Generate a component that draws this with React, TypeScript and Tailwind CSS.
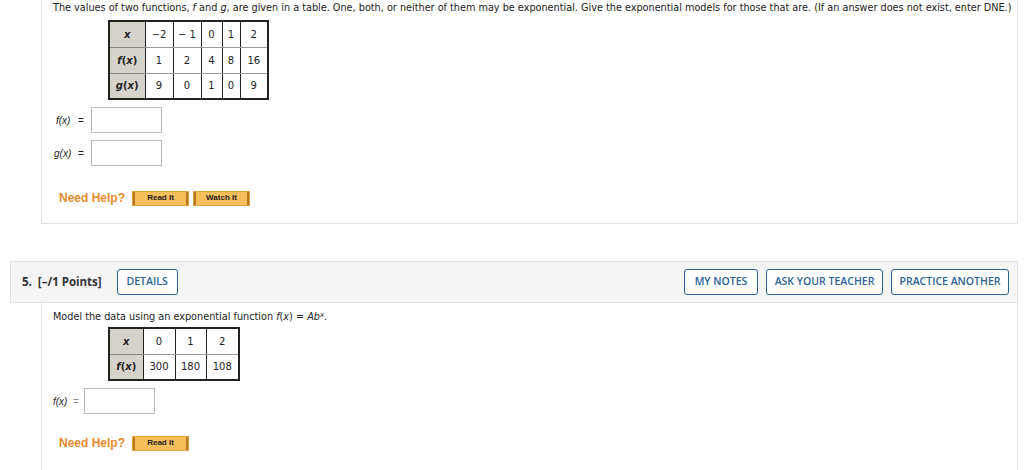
import React from "react";

const verdana = { fontFamily: '"DejaVu Sans", Verdana, sans-serif' };
const open = { fontFamily: '"Open Sans", Arial, sans-serif' };
const arial = { fontFamily: '"Liberation Sans", Arial, sans-serif' };

function HeadCell({ children }: { children: React.ReactNode }) {
  return (
    <td className="bg-[#d6d3cd] border-r border-r-[#222] border-b border-b-[#888] text-center font-bold text-[10px] px-0">
      {children}
    </td>
  );
}

function ValueTable({
  widths,
  head,
  rows,
}: {
  widths: number[];
  head: React.ReactNode[];
  rows: string[][];
}) {
  return (
    <table className="border-collapse border-2 border-[#222] text-[10px] text-[#222] table-fixed" style={verdana}>
      <colgroup>
        {widths.map((w, i) => (
          <col key={i} style={{ width: w }} />
        ))}
      </colgroup>
      <tbody>
        {rows.map((r, i) => (
          <tr key={i} className="h-[26px]">
            <HeadCell>{head[i]}</HeadCell>
            {r.map((v, j) => (
              <td
                key={j}
                className="text-center border-r border-r-[#222] border-b border-b-[#999] last:border-r-0 px-0"
              >
                {v}
              </td>
            ))}
          </tr>
        ))}
      </tbody>
    </table>
  );
}

function AnswerBox({ w = 71 }: { w?: number }) {
  return <div className="h-[26px] border border-[#bbb] bg-white" style={{ width: w }} />;
}

function HelpButton({ label, w }: { label: string; w: number }) {
  return (
    <div
      className="h-[15px] flex items-center justify-center bg-[#f6bf5c] border border-[#e3a23c] shadow-[inset_2px_0_0_#b5781f,inset_-2px_0_0_#b5781f] text-[8px] font-bold text-[#222]"
      style={{ ...arial, width: w }}
    >
      {label}
    </div>
  );
}

function NeedHelp({ watch }: { watch?: boolean }) {
  return (
    <div className="flex items-center ml-[6px]">
      <span className="text-[12px] font-bold text-[#e88a2e] mr-[7px]" style={arial}>
        Need Help?
      </span>
      <HelpButton label="Read It" w={57} />
      {watch && (
        <div className="ml-[4px]">
          <HelpButton label="Watch It" w={57} />
        </div>
      )}
    </div>
  );
}

function OutlineButton({ label, w }: { label: string; w: number }) {
  return (
    <div
      className="h-[26px] flex items-center justify-center border border-[#2d6295] rounded-[3px] bg-white text-[10.5px] font-semibold text-[#2d6295]"
      style={{ ...open, width: w }}
    >
      {label}
    </div>
  );
}

export default function App() {
  return (
    <div className="w-[1024px] h-[470px] overflow-hidden bg-white text-[#222]">
      {/* question 4 tail */}
      <div className="ml-[41px] w-[977px] border-l border-r border-b border-[#e2e2e2] pl-[11px] pb-[16px]">
        <p className="text-[9.7px] leading-[14px] pt-[1px] whitespace-nowrap" style={verdana}>
          The values of two functions, <i>f</i> and <i>g</i>, are given in a table. One, both, or neither of them may be exponential. Give the exponential models for those that are. (If an answer does not exist, enter DNE.)
        </p>
        <div className="ml-[55px] mt-[5px]">
          <ValueTable
            widths={[36, 28, 28, 21, 18, 28]}
            head={[
              <i key="x">x</i>,
              <span key="f">
                <i>f</i>(<i>x</i>)
              </span>,
              <span key="g">
                <i>g</i>(<i>x</i>)
              </span>,
            ]}
            rows={[
              ["−2", "− 1", "0", "1", "2"],
              ["1", "2", "4", "8", "16"],
              ["9", "0", "1", "0", "9"],
            ]}
          />
        </div>
        <div className="flex items-center mt-[7px] text-[10px]" style={arial}>
          <span className="ml-[3px] w-[19px] italic">f(x)</span>
          <span className="ml-[3px] w-[6px]">=</span>
          <div className="ml-[7px]">
            <AnswerBox />
          </div>
        </div>
        <div className="flex items-center mt-[7px] text-[10px]" style={arial}>
          <span className="ml-[1px] w-[21px] italic">g(x)</span>
          <span className="ml-[3px] w-[6px]">=</span>
          <div className="ml-[7px]">
            <AnswerBox />
          </div>
        </div>
        <div className="mt-[23px]">
          <NeedHelp watch />
        </div>
      </div>

      {/* question 5 header */}
      <div className="mt-[37px] ml-[10px] w-[1008px] h-[42px] bg-[#f5f5f5] border border-[#e0e0e0] flex items-center pl-[11px] pr-[8px]">
        <span className="text-[11.5px] font-bold text-[#333]" style={open}>
          5.&nbsp; [–/1 Points]
        </span>
        <div className="ml-[15px]">
          <OutlineButton label="DETAILS" w={61} />
        </div>
        <div className="ml-auto flex gap-[8px]">
          <OutlineButton label="MY NOTES" w={74} />
          <OutlineButton label="ASK YOUR TEACHER" w={117} />
          <OutlineButton label="PRACTICE ANOTHER" w={118} />
        </div>
      </div>

      {/* question 5 body */}
      <div className="ml-[41px] w-[977px] h-[200px] border-l border-r border-[#e2e2e2] pl-[11px]">
        <p className="text-[9.7px] leading-[14px] pt-[7px]" style={verdana}>
          Model the data using an exponential function <i>f</i>(<i>x</i>) = <i>Ab</i>
          <sup className="text-[7px]"><i>x</i></sup>.
        </p>
        <div className="ml-[55px] mt-[3px]">
          <ValueTable
            widths={[34, 32, 31, 33]}
            head={[
              <i key="x">x</i>,
              <span key="f">
                <i>f</i>(<i>x</i>)
              </span>,
            ]}
            rows={[
              ["0", "1", "2"],
              ["300", "180", "108"],
            ]}
          />
        </div>
        <div className="flex items-center mt-[7px] text-[10px]" style={arial}>
          <span className="w-[17px] italic">f(x)</span>
          <span className="ml-[3px] w-[6px] text-[#888]">=</span>
          <div className="ml-[5px]">
            <AnswerBox />
          </div>
        </div>
        <div className="mt-[20px]">
          <NeedHelp />
        </div>
        <div className="ml-[79px] mt-[18px] border-t border-[#e2e2e2]" />
      </div>
    </div>
  );
}
